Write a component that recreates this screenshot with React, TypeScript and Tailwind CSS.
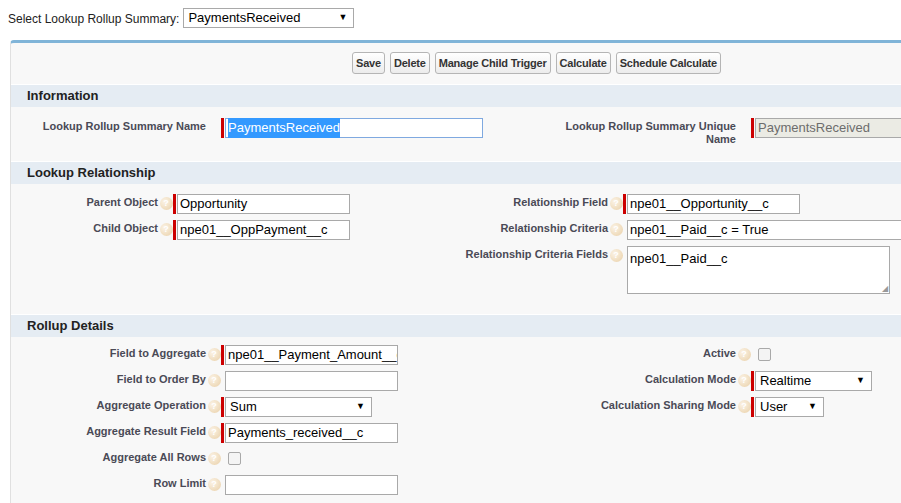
import React from "react";

const Help = () => (
  <span className="flex h-[13px] w-[13px] items-center justify-center rounded-full bg-[radial-gradient(circle_at_35%_35%,#fbf3e6,#e9cfa6)] text-[9px] font-bold leading-none text-white">
    ?
  </span>
);

const Field = ({ help = true, req = false, children }: { help?: boolean; req?: boolean; children: React.ReactNode }) => (
  <div className="flex items-start">
    <div className="flex w-[14px] shrink-0 justify-center pt-[3px]">{help ? <Help /> : null}</div>
    <div className={`mr-[1px] h-[20px] w-[3px] shrink-0 ${req ? "bg-[#c00]" : ""}`} />
    {children}
  </div>
);

const Input = ({ w, value = "", cls = "bg-white text-black" }: { w: string; value?: string; cls?: string }) => (
  <div className={`flex h-[20px] items-center border border-[#a9a9a9] px-[2px] text-[13px] ${w} ${cls}`}>
    {value}
  </div>
);

const Select = ({ w, value }: { w: string; value: string }) => (
  <div className={`flex h-[20px] items-center justify-between border border-[#a9a9a9] bg-white pl-[4px] pr-[6px] text-[13px] text-black ${w}`}>
    <span>{value}</span>
    <span className="text-[9px]">▼</span>
  </div>
);

const Check = () => (
  <div className="mt-[3px] ml-[3px] h-[13px] w-[13px] rounded-[2px] border border-[#a9a9a9] bg-[#f4f4f4]" />
);

const Label = ({ w, children }: { w: string; children: React.ReactNode }) => (
  <div className={`shrink-0 pr-[1px] pt-[2px] text-right text-[11px] font-bold leading-[13px] text-[#4a4a56] ${w}`}>
    {children}
  </div>
);

const Header = ({ title }: { title: string }) => (
  <div className="flex h-[23px] items-center border-t border-white bg-[#e5ecf3] pl-[16px] text-[13px] font-bold text-[#222]">
    {title}
  </div>
);

const Btn = ({ t }: { t: string }) => (
  <div className="flex h-[22px] items-center rounded-[3px] border border-[#b5b5b5] bg-gradient-to-b from-white to-[#ececec] px-[3px] text-[11px] font-bold tracking-[-0.2px] text-[#333]">
    {t}
  </div>
);

export default function App() {
  return (
    <div className="h-[503px] w-[901px] overflow-hidden bg-white font-['Liberation_Sans',Arial,sans-serif]">
      <div className="flex h-[40px] items-start pl-[8px] pt-[8px] text-[12px] text-[#222]">
        <span className="mt-[2px] mr-[4px]">Select Lookup Rollup Summary:</span>
        <Select w="w-[171px]" value="PaymentsReceived" />
      </div>

      <div className="ml-[10px] w-[1000px] rounded-tl-[4px] border-t-[3px] border-l border-[#80b4d8] border-l-[#e0e0e0] bg-[#f8f8f8] pb-[20px]">
        <div className="flex gap-[5px] pt-[9px] pb-[10px] pl-[341px]">
          <Btn t="Save" />
          <Btn t="Delete" />
          <Btn t="Manage Child Trigger" />
          <Btn t="Calculate" />
          <Btn t="Schedule Calculate" />
        </div>

        <Header title="Information" />
        <div className="flex h-[54px] pt-[11px]">
          <Label w="w-[196px]">Lookup Rollup Summary Name</Label>
          <div className="w-[345px] shrink-0">
            <Field help={false} req>
              <div className="flex h-[20px] w-[258px] items-center border border-[#7fa9e0] bg-white px-[2px] text-[13px]">
                <span className="bg-[#3399ff] text-white">PaymentsReceived</span>
              </div>
            </Field>
          </div>
          <Label w="w-[185px]">Lookup Rollup Summary Unique Name</Label>
          <Field help={false} req>
            <Input w="w-[160px]" value="PaymentsReceived" cls="bg-[#ebebe4] text-[#6d6d6d]" />
          </Field>
        </div>

        <Header title="Lookup Relationship" />
        <div className="flex pt-[10px] pb-[20px]">
          <div className="flex w-[430px] shrink-0 flex-col gap-[6px]">
            <div className="flex">
              <Label w="w-[148px]">Parent Object</Label>
              <Field req><Input w="w-[173px]" value="Opportunity" /></Field>
            </div>
            <div className="flex">
              <Label w="w-[148px]">Child Object</Label>
              <Field req><Input w="w-[173px]" value="npe01__OppPayment__c" /></Field>
            </div>
          </div>
          <div className="flex flex-col gap-[6px]">
            <div className="flex">
              <Label w="w-[168px]">Relationship Field</Label>
              <Field req><Input w="w-[173px]" value="npe01__Opportunity__c" /></Field>
            </div>
            <div className="flex">
              <Label w="w-[168px]">Relationship Criteria</Label>
              <Field><Input w="w-[290px]" value="npe01__Paid__c = True" /></Field>
            </div>
            <div className="flex">
              <Label w="w-[168px]">Relationship Criteria Fields</Label>
              <Field>
                <div className="relative h-[48px] w-[263px] border border-[#a9a9a9] bg-white px-[2px] pt-[2px] text-[13px]">
                  npe01__Paid__c
                  <span className="absolute right-[1px] bottom-[0px] text-[8px] leading-none text-[#999]">◢</span>
                </div>
              </Field>
            </div>
          </div>
        </div>

        <Header title="Rollup Details" />
        <div className="flex pt-[8px]">
          <div className="flex w-[550px] shrink-0 flex-col gap-[6px]">
            <div className="flex">
              <Label w="w-[196px]">Field to Aggregate</Label>
              <Field req><Input w="w-[173px]" value="npe01__Payment_Amount__c" cls="bg-white text-black overflow-hidden whitespace-nowrap" /></Field>
            </div>
            <div className="flex">
              <Label w="w-[196px]">Field to Order By</Label>
              <Field><Input w="w-[173px]" /></Field>
            </div>
            <div className="flex">
              <Label w="w-[196px]">Aggregate Operation</Label>
              <Field req><Select w="w-[147px]" value="Sum" /></Field>
            </div>
            <div className="flex">
              <Label w="w-[196px]">Aggregate Result Field</Label>
              <Field req><Input w="w-[173px]" value="Payments_received__c" /></Field>
            </div>
            <div className="flex h-[20px]">
              <Label w="w-[196px]">Aggregate All Rows</Label>
              <Field><Check /></Field>
            </div>
            <div className="flex">
              <Label w="w-[196px]">Row Limit</Label>
              <Field><Input w="w-[173px]" /></Field>
            </div>
          </div>
          <div className="flex flex-col gap-[6px]">
            <div className="flex h-[20px]">
              <Label w="w-[176px]">Active</Label>
              <Field><Check /></Field>
            </div>
            <div className="flex">
              <Label w="w-[176px]">Calculation Mode</Label>
              <Field req><Select w="w-[117px]" value="Realtime" /></Field>
            </div>
            <div className="flex">
              <Label w="w-[176px]">Calculation Sharing Mode</Label>
              <Field req><Select w="w-[69px]" value="User" /></Field>
            </div>
          </div>
        </div>
      </div>
    </div>
  );
}
